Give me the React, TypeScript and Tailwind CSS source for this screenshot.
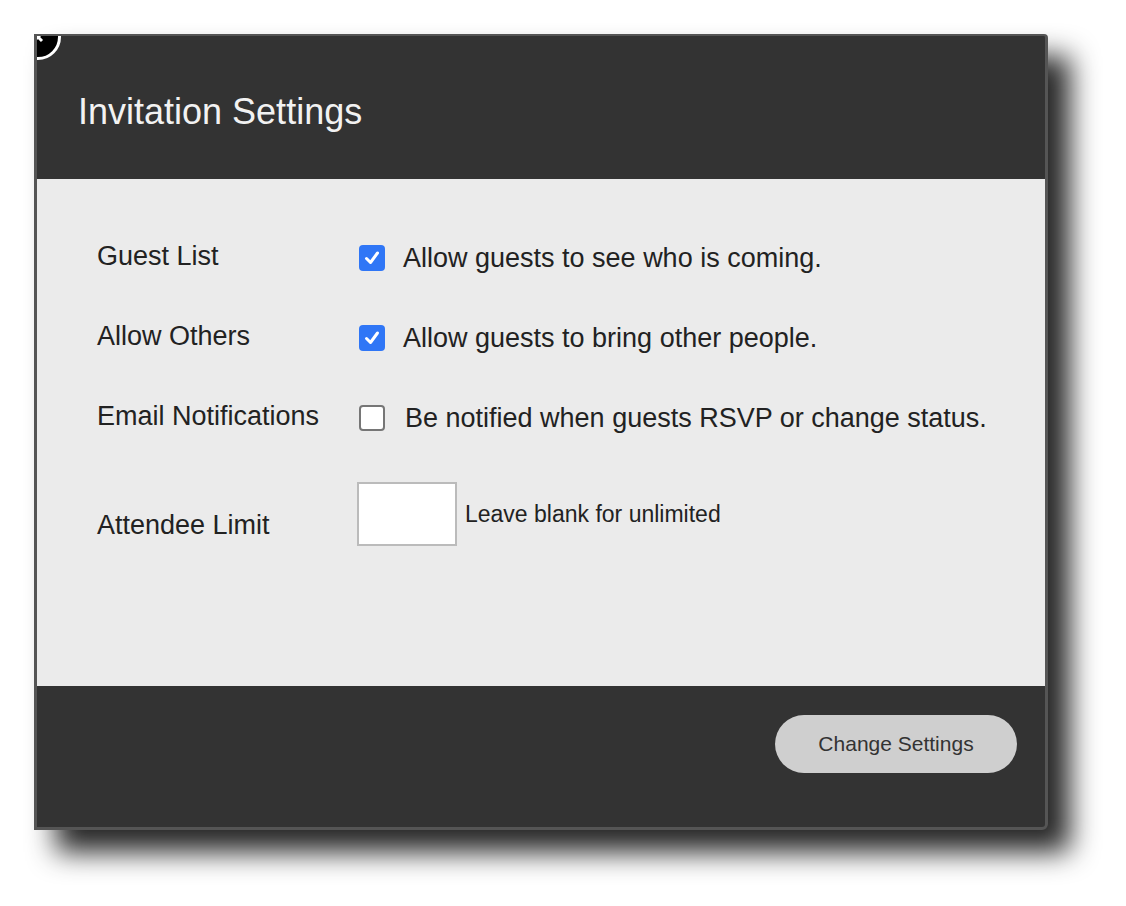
export default function App() {
  const font = { fontFamily: '"Liberation Sans", Arial, sans-serif' };
  const Check = ({ on }: { on: boolean }) =>
    on ? (
      <div className="w-[26px] h-[26px] rounded-[4px] bg-[#2f76f6] flex items-center justify-center shrink-0">
        <svg width="18" height="18" viewBox="0 0 18 18"><path d="M3.5 9.5 L7.5 13.5 L14.5 4" stroke="white" strokeWidth="3" fill="none" strokeLinecap="round" strokeLinejoin="round" /></svg>
      </div>
    ) : (
      <div className="w-[26px] h-[26px] rounded-[4px] bg-white border-2 border-[#767676] shrink-0" />
    );
  const rows: [string, boolean, string][] = [
    ["Guest List", true, "Allow guests to see who is coming."],
    ["Allow Others", true, "Allow guests to bring other people."],
    ["Email Notifications", false, "Be notified when guests RSVP or change status."],
  ];
  return (
    <div className="w-[1126px] h-[906px] bg-white relative overflow-hidden" style={font}>
      <div className="absolute left-[34px] top-[34px] w-[1014px] h-[796px] bg-[#333] border-l-[3px] border-t-[2px] border-r-[3px] border-b-[3px] border-[#555] rounded-br-[6px] rounded-tr-[4px] shadow-[22px_22px_28px_rgba(0,0,0,0.85)] flex flex-col overflow-hidden">
        <div className="absolute left-[-22px] top-[-22px] w-[46px] h-[46px] rounded-full bg-black border-[3px] border-white flex items-center justify-center">
          <svg width="16" height="16" viewBox="0 0 16 16"><path d="M4 4 L12 12 M12 4 L4 12" stroke="white" strokeWidth="3" /></svg>
        </div>
        <div className="h-[143px] flex items-start pl-[41px] pt-[49px] text-[36px] text-[#f2f2f2]">Invitation Settings</div>
        <div className="h-[507px] bg-[#ebebeb] pl-[60px] pt-[39px] text-[27px] text-[#222]">
          {rows.map(([l, on, t], i) => (
            <div key={i} className="flex items-center h-[80px]">
              <div className="w-[262px] -mt-[4px]">{l}</div>
              <Check on={on} />
              <div className={on ? "ml-[18px]" : "ml-[20px]"}>{t}</div>
            </div>
          ))}
          <div className="flex items-center h-[64px] mt-[24px]">
            <div className="w-[260px] mt-[22px]">Attendee Limit</div>
            <div className="w-[100px] h-[64px] bg-white border-2 border-[#bbb]" />
            <div className="ml-[8px] text-[23px]">Leave blank for unlimited</div>
          </div>
        </div>
        <div className="flex-1 flex justify-end items-start pt-[29px] pr-[28px]">
          <div className="w-[242px] h-[58px] rounded-full bg-[#cfcfcf] text-[#333] text-[21px] flex items-center justify-center">Change Settings</div>
        </div>
      </div>
    </div>
  );
}
